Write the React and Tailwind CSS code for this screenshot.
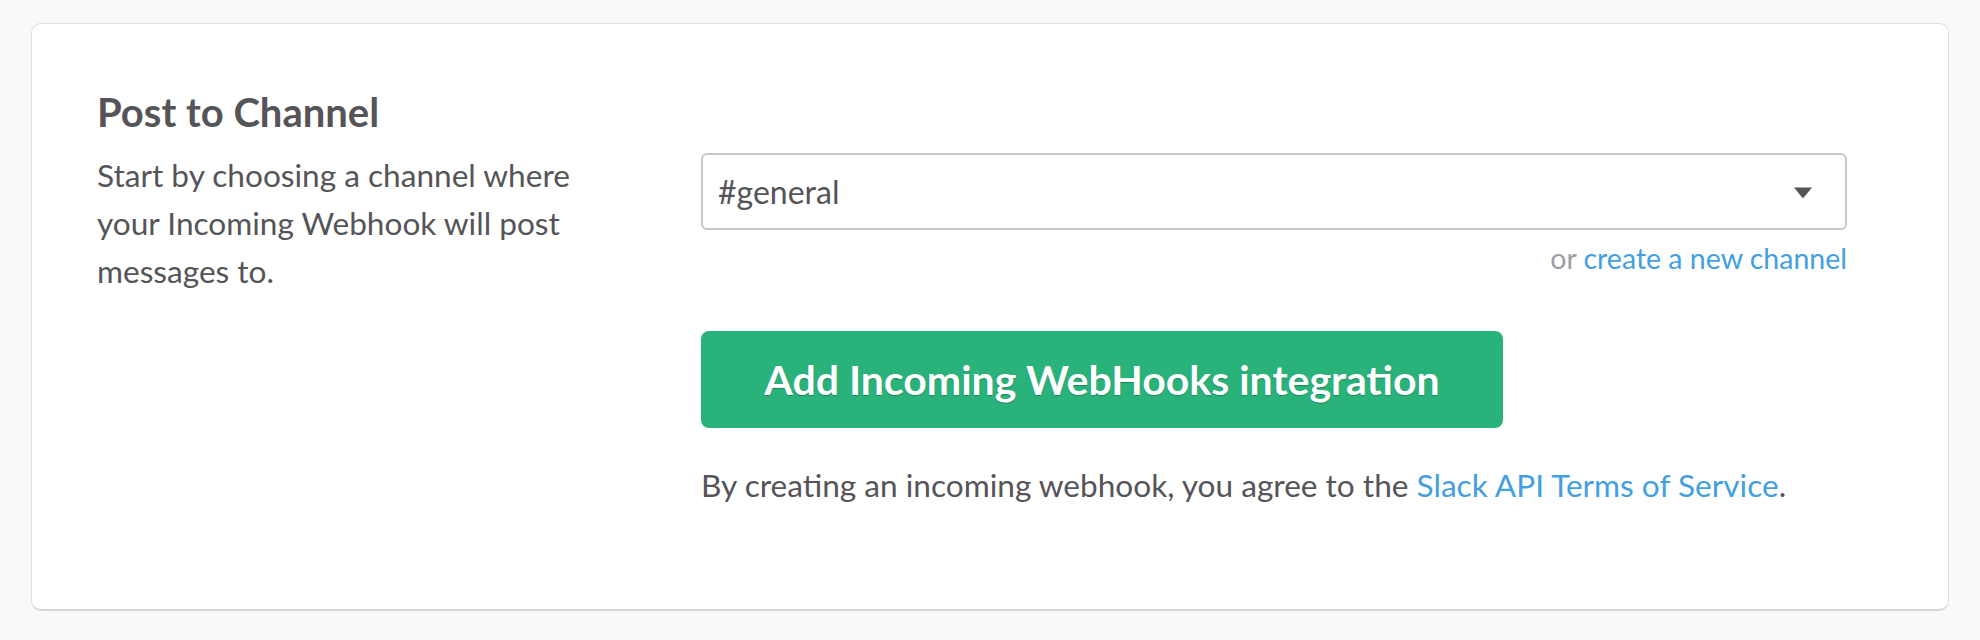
import React, { useState } from 'react'

const font = { fontFamily: 'Lato, "Noto Sans", sans-serif' }

function ChannelSelect({ value }) {
  return (
    <div className="flex h-[77px] items-center justify-between rounded-[6px] border-2 border-[#c9c9c9] bg-white pl-[15px] pr-[32px]">
      <span className="text-[32px] text-[#555459]">{value}</span>
      <svg width="20" height="13" viewBox="0 0 20 13" className="mt-[2px]">
        <path d="M1 1.5 L19 1.5 L10.8 11.6 Q10 12.4 9.2 11.6 Z" fill="#555459" />
      </svg>
    </div>
  )
}

export default function App() {
  const [channel] = useState('#general')

  return (
    <div className="min-h-[640px] bg-[#f9f9f9] px-[31px] pt-[23px]" style={font}>
      <div className="flex rounded-[10px] border border-[#dedede] border-b-2 border-b-[#d6d6d6] bg-white pb-[100px] pl-[65px] pr-[101px] pt-[64px]">
        <div className="w-[500px] shrink-0">
          <h2 className="text-[40px] font-bold leading-[48px] text-[#555459]">Post to Channel</h2>
          <p className="mt-[15px] text-[31.6px] leading-[48px] text-[#555459]">
            Start by choosing a channel where your Incoming Webhook will post messages to.
          </p>
        </div>
        <div className="ml-[104px] mt-[65px] flex-1">
          <ChannelSelect value={channel} />
          <div className="mt-[10px] text-right text-[28.5px] leading-[36px]">
            <span className="text-[#9e9ea6]">or </span>
            <a href="#" className="text-[#439fe0]">create a new channel</a>
          </div>
          <button className="mt-[55px] h-[97px] w-[802px] rounded-[8px] bg-[#2ab27b] text-[41px] font-bold text-white text-shadow-[0_1px_1px_rgba(0,0,0,0.25)]">
            Add Incoming WebHooks integration
          </button>
          <p className="mt-[33px] text-[31.6px] leading-[48px] text-[#555459]">
            By creating an incoming webhook, you agree to the{' '}
            <a href="#" className="text-[#439fe0]">Slack API Terms of Service</a>.
          </p>
        </div>
      </div>
    </div>
  )
}
